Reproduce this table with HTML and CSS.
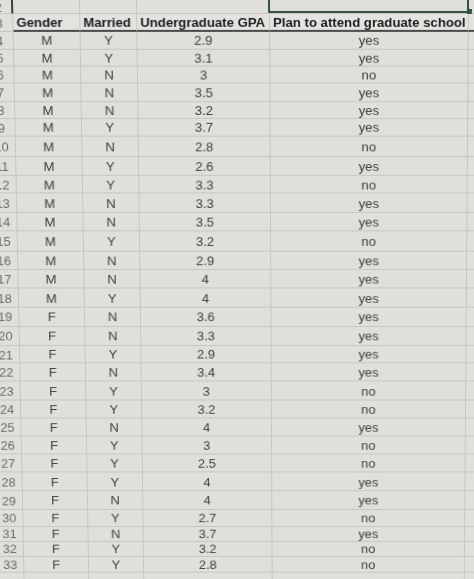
FILE: index.html
```html
<!DOCTYPE html>
<html lang="en">
<head>
<meta charset="utf-8">
<title>Graduate school survey</title>
<link rel="stylesheet" href="styles.css">
</head>
<body>
<div class="viewport">
  <div class="sheet">
    <div class="row r2"><div class="c rh">2</div><div class="c"></div><div class="c"></div><div class="c"></div><div class="c selcell"><div class="sel"></div></div><div class="c"></div></div>
    <div class="row hdr"><div class="c rh">3</div><div class="c h">Gender</div><div class="c h">Married</div><div class="c h">Undergraduate GPA</div><div class="c h">Plan to attend graduate school</div><div class="c"></div></div>
    <div class="row"><div class="c rh">4</div><div class="c">M</div><div class="c">Y</div><div class="c">2.9</div><div class="c">yes</div><div class="c"></div></div>
    <div class="row"><div class="c rh">5</div><div class="c">M</div><div class="c">Y</div><div class="c">3.1</div><div class="c">yes</div><div class="c"></div></div>
    <div class="row"><div class="c rh">6</div><div class="c">M</div><div class="c">N</div><div class="c">3</div><div class="c">no</div><div class="c"></div></div>
    <div class="row"><div class="c rh">7</div><div class="c">M</div><div class="c">N</div><div class="c">3.5</div><div class="c">yes</div><div class="c"></div></div>
    <div class="row"><div class="c rh">8</div><div class="c">M</div><div class="c">N</div><div class="c">3.2</div><div class="c">yes</div><div class="c"></div></div>
    <div class="row"><div class="c rh">9</div><div class="c">M</div><div class="c">Y</div><div class="c">3.7</div><div class="c">yes</div><div class="c"></div></div>
    <div class="row"><div class="c rh">10</div><div class="c">M</div><div class="c">N</div><div class="c">2.8</div><div class="c">no</div><div class="c"></div></div>
    <div class="row"><div class="c rh">11</div><div class="c">M</div><div class="c">Y</div><div class="c">2.6</div><div class="c">yes</div><div class="c"></div></div>
    <div class="row"><div class="c rh">12</div><div class="c">M</div><div class="c">Y</div><div class="c">3.3</div><div class="c">no</div><div class="c"></div></div>
    <div class="row"><div class="c rh">13</div><div class="c">M</div><div class="c">N</div><div class="c">3.3</div><div class="c">yes</div><div class="c"></div></div>
    <div class="row"><div class="c rh">14</div><div class="c">M</div><div class="c">N</div><div class="c">3.5</div><div class="c">yes</div><div class="c"></div></div>
    <div class="row"><div class="c rh">15</div><div class="c">M</div><div class="c">Y</div><div class="c">3.2</div><div class="c">no</div><div class="c"></div></div>
    <div class="row"><div class="c rh">16</div><div class="c">M</div><div class="c">N</div><div class="c">2.9</div><div class="c">yes</div><div class="c"></div></div>
    <div class="row"><div class="c rh">17</div><div class="c">M</div><div class="c">N</div><div class="c">4</div><div class="c">yes</div><div class="c"></div></div>
    <div class="row"><div class="c rh">18</div><div class="c">M</div><div class="c">Y</div><div class="c">4</div><div class="c">yes</div><div class="c"></div></div>
    <div class="row"><div class="c rh">19</div><div class="c">F</div><div class="c">N</div><div class="c">3.6</div><div class="c">yes</div><div class="c"></div></div>
    <div class="row"><div class="c rh">20</div><div class="c">F</div><div class="c">N</div><div class="c">3.3</div><div class="c">yes</div><div class="c"></div></div>
    <div class="row"><div class="c rh">21</div><div class="c">F</div><div class="c">Y</div><div class="c">2.9</div><div class="c">yes</div><div class="c"></div></div>
    <div class="row"><div class="c rh">22</div><div class="c">F</div><div class="c">N</div><div class="c">3.4</div><div class="c">yes</div><div class="c"></div></div>
    <div class="row"><div class="c rh">23</div><div class="c">F</div><div class="c">Y</div><div class="c">3</div><div class="c">no</div><div class="c"></div></div>
    <div class="row"><div class="c rh">24</div><div class="c">F</div><div class="c">Y</div><div class="c">3.2</div><div class="c">no</div><div class="c"></div></div>
    <div class="row"><div class="c rh">25</div><div class="c">F</div><div class="c">N</div><div class="c">4</div><div class="c">yes</div><div class="c"></div></div>
    <div class="row"><div class="c rh">26</div><div class="c">F</div><div class="c">Y</div><div class="c">3</div><div class="c">no</div><div class="c"></div></div>
    <div class="row"><div class="c rh">27</div><div class="c">F</div><div class="c">Y</div><div class="c">2.5</div><div class="c">no</div><div class="c"></div></div>
    <div class="row"><div class="c rh">28</div><div class="c">F</div><div class="c">Y</div><div class="c">4</div><div class="c">yes</div><div class="c"></div></div>
    <div class="row"><div class="c rh">29</div><div class="c">F</div><div class="c">N</div><div class="c">4</div><div class="c">yes</div><div class="c"></div></div>
    <div class="row"><div class="c rh">30</div><div class="c">F</div><div class="c">Y</div><div class="c">2.7</div><div class="c">no</div><div class="c"></div></div>
    <div class="row"><div class="c rh">31</div><div class="c">F</div><div class="c">N</div><div class="c">3.7</div><div class="c">yes</div><div class="c"></div></div>
    <div class="row"><div class="c rh">32</div><div class="c">F</div><div class="c">Y</div><div class="c">3.2</div><div class="c">no</div><div class="c"></div></div>
    <div class="row"><div class="c rh">33</div><div class="c">F</div><div class="c">Y</div><div class="c">2.8</div><div class="c">no</div><div class="c"></div></div>
    <div class="row"><div class="c rh">34</div><div class="c"></div><div class="c"></div><div class="c"></div><div class="c"></div><div class="c"></div></div>
  </div>
</div>
</body>
</html>
```

FILE: styles.css
```css
html, body {
  margin: 0;
  padding: 0;
  width: 474px;
  height: 579px;
  overflow: hidden;
  background: #dddcd8;
}

.viewport {
  width: 474px;
  height: 579px;
  overflow: hidden;
}

.sheet {
  margin-left: -19px;
  width: 528px;
  display: grid;
  grid-template-rows:
    14px 18px
    18.1px 17.15px 17.2px 18.25px 17.25px 18.3px
    20.4px 19.4px 18.45px 19.5px 19.55px 20.6px 18.6px 19.7px 19.7px
    19.8px 19.8px 18.8px 18.9px 19.95px 18.95px 19px
    19.05px 19.05px 20.2px 19.15px 18.15px 16px 16.1px 17.15px
    24px;
  background: #e0dfdb;
  font-family: "Liberation Sans", Arial, sans-serif;
  transform-origin: 365px 0;
  transform: perspective(1000px) rotateX(-3.42deg);
}

.row {
  display: grid;
  grid-template-columns: 32px 67px 57px 133px 199px 40px;
  min-height: 0;
}

.c {
  box-sizing: border-box;
  display: flex;
  align-items: center;
  justify-content: center;
  min-width: 0;
  min-height: 0;
  border-right: 1px solid #c6c5c0;
  border-bottom: 1px solid #c6c5c0;
  font-size: 13.3px;
  color: #404040;
  white-space: nowrap;
  line-height: 1;
  padding-top: 1px;
}

.rh {
  color: #6a6a68;
  font-size: 13px;
  padding-left: 4px;
}

.r2 .rh {
  border-right: 2px solid #3d3d3b;
}

.hdr .c {
  border-bottom: 2px solid #4a4a48;
  background: #e4e3df;
}

.hdr .rh {
  border-bottom: 1px solid #c6c5c0;
  background: #e0dfdb;
}

.h {
  justify-content: flex-start;
  padding-left: 3px;
  font-weight: bold;
  font-size: 13.2px;
  color: #1d1d1d;
}

.selcell {
  position: relative;
  overflow: visible;
}

.sel {
  position: absolute;
  left: -2px;
  right: -1px;
  top: -4px;
  bottom: 0;
  border: 2px solid #2e553a;
}

.sel::after {
  content: "";
  position: absolute;
  right: -5px;
  bottom: -3px;
  width: 5px;
  height: 5px;
  background: #2e553a;
}
```
